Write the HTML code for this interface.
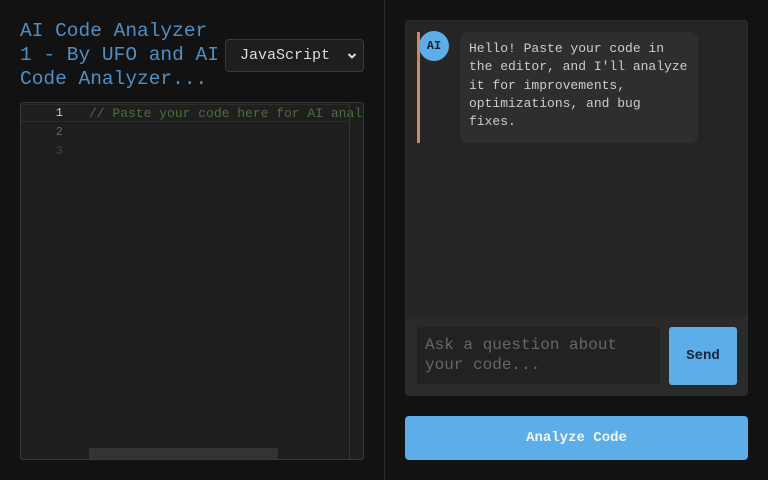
<!DOCTYPE html>
<html><head><style>
*{box-sizing:border-box;margin:0;padding:0}
body{width:768px;height:480px;background:#121212;font-family:"Liberation Mono",monospace;position:relative;overflow:hidden}
.div{position:absolute;left:384px;top:0;width:1px;height:480px;background:#2a2a2a}
.title{position:absolute;left:20px;top:19px;color:#4f8fc4;font-size:19.5px;line-height:24px;width:205px}
.sel{position:absolute;left:225px;top:39px;width:139px;height:33px;background:#1e1e1e;border:1px solid #3a3a3a;border-radius:4px;color:#ddd;font-size:15px;line-height:31px;padding-left:14px}
.sel svg{position:absolute;right:6px;top:11px}
.ed{position:absolute;left:20px;top:102px;width:344px;height:358px;background:#1e1e1e;border:1px solid #3a3a3a;border-radius:3px;overflow:hidden}
.hl{position:absolute;left:0;top:1px;width:328px;height:18px;border-top:1px solid #2c2c2c;border-bottom:1px solid #2c2c2c;background:#1f1f1f}
.ln{position:absolute;left:0;width:42px;text-align:right;font-size:12px;color:#666}
.code{position:absolute;left:68px;top:2px;font-size:13px;color:#4e6e3e;white-space:nowrap;line-height:17px}
.mm{position:absolute;left:328px;top:0;width:1px;height:358px;background:#333}
.sb{position:absolute;left:68px;top:345px;width:189px;height:12px;background:#333}
.chat{position:absolute;left:405px;top:20px;width:343px;height:376px;background:#252525;border-radius:4px;overflow:hidden;border:1px solid #2c2c2c}
.bar{position:absolute;left:11px;top:11px;width:3px;height:111px;background:#c98a6b}
.av{position:absolute;left:13px;top:10px;width:30px;height:30px;border-radius:50%;background:#5dade9;color:#123;font-weight:bold;font-size:12px;text-align:center;line-height:30px}
.bub{position:absolute;left:54px;top:11px;width:238px;height:111px;background:#2e2e2e;border-radius:8px;padding:8px 9px 9px 9px;color:#ccc;font-size:13px;line-height:18.3px;white-space:nowrap}
.inp{position:absolute;left:0;top:295px;width:343px;height:81px;background:#2a2a2a}
.ta{position:absolute;left:11px;top:11px;width:243px;height:57px;background:#222;border-radius:3px;color:#666;font-size:16px;line-height:20px;padding:8px 8px}
.send{position:absolute;left:263px;top:11px;width:68px;height:58px;background:#5dade9;border-radius:3px;color:#13263a;font-weight:bold;font-size:14px;text-align:center;line-height:58px}
.an{position:absolute;left:405px;top:416px;width:343px;height:44px;background:#5dade9;border-radius:4px;color:#f0f6fb;font-weight:bold;font-size:14px;text-align:center;line-height:44px}
</style></head><body>
<div class="div"></div>
<div class="title">AI Code Analyzer 1 - By UFO and AI Code Analyzer...</div>
<div class="sel">JavaScript<svg width="10" height="10" viewBox="0 0 10 10"><path d="M1.5 3 L5 6.5 L8.5 3" stroke="#ddd" stroke-width="2" fill="none"/></svg></div>
<div class="ed">
<div class="hl"></div>
<div class="ln" style="top:3px;color:#ccc">1</div>
<div class="ln" style="top:22px">2</div>
<div class="ln" style="top:41px;color:#444">3</div>
<div class="code">// Paste your code here for AI analysis</div>
<div class="mm"></div>
<div class="sb"></div>
</div>
<div class="chat">
<div class="bar"></div>
<div class="av">AI</div>
<div class="bub">Hello! Paste your code in<br>the editor, and I'll analyze<br>it for improvements,<br>optimizations, and bug<br>fixes.</div>
<div class="inp"><div class="ta">Ask a question about your code...</div><div class="send">Send</div></div>
</div>
<div class="an">Analyze Code</div>
</body></html>
